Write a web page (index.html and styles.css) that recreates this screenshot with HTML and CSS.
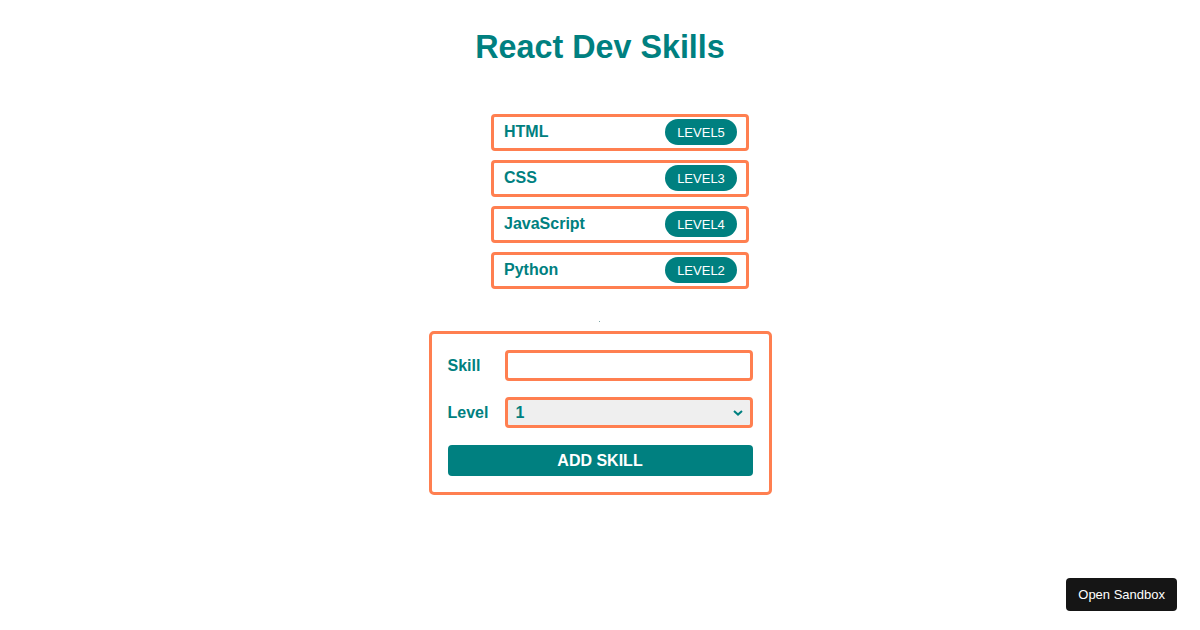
FILE: index.html
```
<!DOCTYPE html>
<html lang="en">
<head>
<meta charset="utf-8">
<title>React Dev Skills</title>
<link rel="stylesheet" href="styles.css">
</head>
<body>
<div class="app">
  <h1 class="title">React Dev Skills</h1>
  <ul class="skill-list">
    <li class="skill-item"><span class="skill-name">HTML</span><span class="level">LEVEL5</span></li>
    <li class="skill-item"><span class="skill-name">CSS</span><span class="level">LEVEL3</span></li>
    <li class="skill-item"><span class="skill-name">JavaScript</span><span class="level">LEVEL4</span></li>
    <li class="skill-item"><span class="skill-name">Python</span><span class="level">LEVEL2</span></li>
  </ul>
  <div class="dot"></div>
  <form class="skill-form">
    <div class="row">
      <label class="label" for="skill">Skill</label>
      <input class="field" id="skill" type="text">
    </div>
    <div class="row">
      <label class="label" for="level">Level</label>
      <div class="select-wrap">
        <select class="field select" id="level">
          <option>1</option>
          <option>2</option>
          <option>3</option>
          <option>4</option>
          <option>5</option>
        </select>
        <svg class="chevron" width="10" height="6" viewBox="0 0 10 6"><path d="M1 1 L5 4.6 L9 1" fill="none" stroke="#008080" stroke-width="2"/></svg>
      </div>
    </div>
    <button class="add-btn" type="button">ADD SKILL</button>
  </form>
</div>
<a class="sandbox-btn">Open Sandbox</a>
</body>
</html>
```
FILE: styles.css
```
* { box-sizing: border-box; }
body {
  margin: 0;
  font-family: "Liberation Sans", Arial, sans-serif;
  color: #008080;
  background: #fff;
}
.app {
  padding-top: 29px;
  display: flex;
  flex-direction: column;
}
.title {
  margin: 0;
  font-size: 32.3px;
  line-height: 37px;
  font-weight: bold;
  text-align: center;
  color: #008080;
}
.skill-list {
  list-style: none;
  margin: 48px 0 0;
  padding: 0 0 0 40px;
  display: flex;
  flex-direction: column;
  align-items: center;
  gap: 9px;
}
.skill-item {
  width: 258px;
  height: 37px;
  border: 3px solid #ff7f50;
  border-radius: 4px;
  display: flex;
  align-items: center;
  justify-content: space-between;
  padding: 0 9px 1px 10px;
}
.skill-name {
  font-size: 16px;
  font-weight: bold;
}
.level {
  height: 26px;
  width: 72px;
  border-radius: 13px;
  background: #008080;
  color: #fff;
  font-size: 13px;
  display: flex;
  align-items: center;
  justify-content: center;
}
.dot {
  width: 1px;
  height: 1px;
  background: #7fa8a8;
  margin: 32px auto 9px;
  align-self: center;
  transform: translateX(-1px);
}
.skill-form {
  align-self: center;
  width: 343px;
  border: 3px solid #ff7f50;
  border-radius: 5px;
  padding: 16px;
  display: flex;
  flex-direction: column;
  gap: 16px;
}
.row {
  display: flex;
  align-items: center;
}
.label {
  width: 58px;
  font-size: 16px;
  font-weight: bold;
  color: #008080;
}
.field {
  width: 248px;
  height: 31px;
  border: 3px solid #ff7f50;
  border-radius: 4px;
  font-family: inherit;
  font-size: 16px;
  outline: none;
  background: #fff;
}
.select-wrap {
  position: relative;
  width: 248px;
  height: 31px;
}
.select {
  appearance: none;
  -webkit-appearance: none;
  background: #efefef;
  color: #008080;
  font-weight: bold;
  padding: 0 0 0 8px;
}
.chevron {
  position: absolute;
  right: 10px;
  top: 13px;
}
.add-btn {
  margin-top: 1px;
  height: 31px;
  border: none;
  border-radius: 4px;
  background: #008080;
  color: #fff;
  font-family: inherit;
  font-size: 16px;
  font-weight: bold;
}
.sandbox-btn {
  position: fixed;
  right: 23px;
  bottom: 19px;
  height: 33px;
  padding: 0 12px;
  display: flex;
  align-items: center;
  background: #151515;
  color: #fff;
  font-size: 13px;
  border-radius: 4px;
}
```
